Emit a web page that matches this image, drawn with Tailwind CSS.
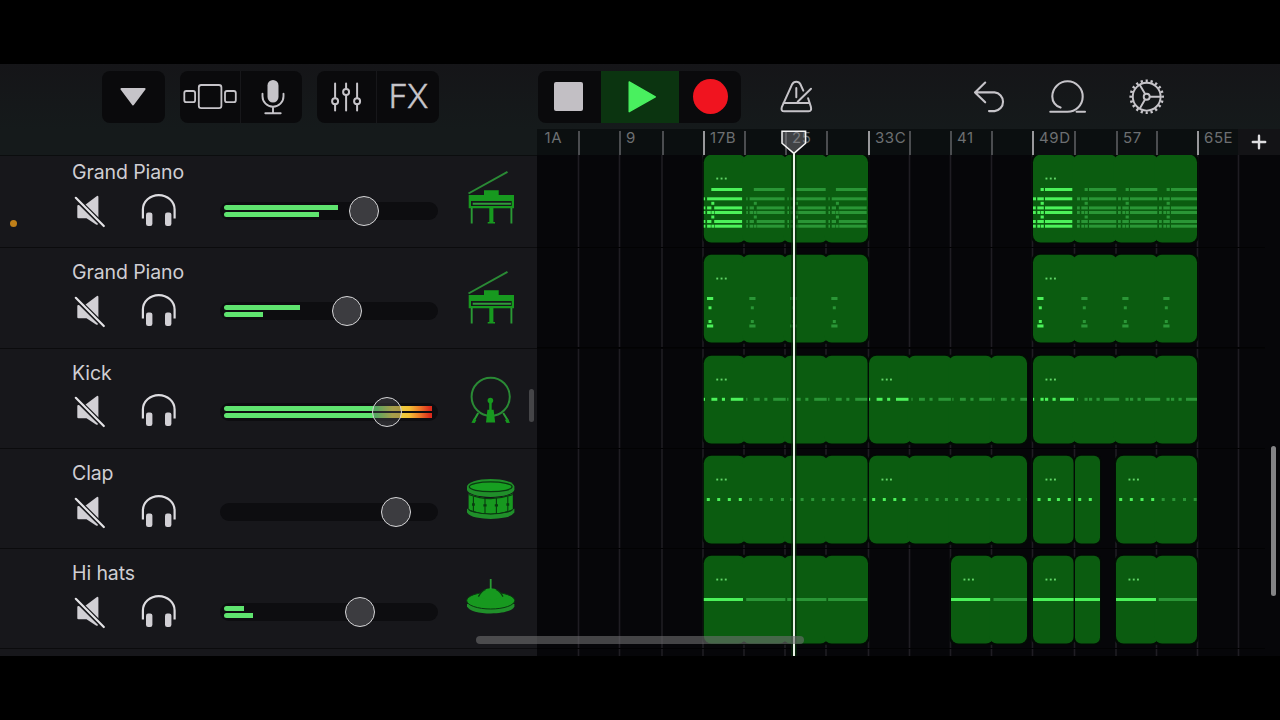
<!DOCTYPE html>
<html lang="en">

<head>
    <meta charset="UTF-8" />
    <title>Tracks</title>
    <meta name="viewport" content="width=device-width, initial-scale=1.0" />
    <script src="https://cdn.jsdelivr.net/npm/@tailwindcss/browser@4"></script>
</head>

<body class="bg-black w-[1280px] h-[720px] overflow-hidden flex flex-col justify-center font-['Inter',sans-serif]">

    <div class="relative h-[592px] flex flex-col overflow-hidden bg-[#17171b]">

        <!-- Toolbar -->
        <header class="h-[65px] shrink-0 flex items-start pt-[7px] pl-[102px] bg-linear-to-b from-[#151518] to-[#151a1b] text-[#c6c4c9]">
            <button class="w-[63px] h-[52px] rounded-lg bg-[#0a0a0c] flex items-center justify-center">
                <svg class="w-[28px] h-[20px] mr-px" viewBox="0 0 28 20" fill="currentColor" stroke="currentColor" stroke-width="2" stroke-linejoin="round">
                    <path d="M2.4 2H25.6L14 17.5Z" />
                </svg>
            </button>

            <div class="ml-[15px] w-[122px] h-[52px] rounded-lg bg-[#0a0a0c] flex overflow-hidden">
                <button class="w-[61px] border-r border-[#17171a] flex items-center justify-center">
                    <svg class="w-[56px] h-[28px] shrink-0" viewBox="182 83 56 28" fill="none" stroke="currentColor" stroke-width="1.8">
                        <rect x="184.3" y="91" width="10.8" height="11.2" rx="2" />
                        <rect x="198.8" y="85" width="22.6" height="23.2" rx="2.4" />
                        <rect x="225" y="91" width="10.8" height="11.2" rx="2" />
                    </svg>
                </button>
                <button class="w-[61px] flex items-center justify-center">
                    <svg class="w-[26px] h-[37px] ml-[2px]" viewBox="259.5 78 26 37" fill="none" stroke="currentColor" stroke-width="1.9" stroke-linecap="round">
                        <rect x="267" y="79" width="11" height="22.6" rx="5.5" fill="currentColor" stroke="none" />
                        <path d="M262 92.8V95.2A10.5 10.5 0 0 0 283 95.2V92.8M272.5 106V112.3M264.8 112.3H280.2" />
                    </svg>
                </button>
            </div>

            <div class="ml-[15px] w-[122px] h-[52px] rounded-lg bg-[#0a0a0c] flex overflow-hidden">
                <button class="w-[60px] border-r border-[#17171a] flex items-center justify-center">
                    <svg class="w-[32px] h-[30px] mr-px" viewBox="330.3 81.5 32 30" fill="none" stroke="currentColor" stroke-width="2" stroke-linecap="round">
                        <path d="M335.4 83V97.3M335.4 104V110M346.4 83V88M346.4 94.7V110M357.4 83V97.3M357.4 104V110" />
                        <circle cx="335.4" cy="100.7" r="3" />
                        <circle cx="346.4" cy="91.4" r="3" />
                        <circle cx="357.4" cy="100.7" r="3" />
                    </svg>
                </button>
                <button class="w-[62px] flex items-center justify-center text-[33px] font-light tracking-[-1px] [-webkit-text-stroke:0.3px_#c6c4c9]">FX</button>
            </div>

            <div class="ml-[99px] w-[203px] h-[52px] rounded-lg bg-[#0a0a0c] flex overflow-hidden">
                <button class="w-[63px] flex items-center justify-center">
                    <span class="w-[29px] h-[29px] rounded-[2px] bg-[#c2bfc4] mr-[2px] -mt-px"></span>
                </button>
                <button class="w-[78px] bg-[#0b3410] flex items-center justify-center">
                    <svg class="w-[30px] h-[34px] ml-[3px]" viewBox="0 0 30 34" fill="#49f05f" stroke="#49f05f" stroke-width="1.4" stroke-linejoin="round">
                        <path d="M2.2 1.9L28.3 16.8L2.2 31.7Z" />
                    </svg>
                </button>
                <button class="w-[62px] flex items-center justify-center">
                    <span class="w-[35px] h-[35px] rounded-full bg-[#f0141f] -mt-px"></span>
                </button>
            </div>

            <svg class="ml-[38px] mt-[8px] w-[36px] h-[36px]" viewBox="779 79 36 36" fill="none" stroke="currentColor" stroke-width="2" stroke-linecap="round" stroke-linejoin="round">
                <path d="M808.1 98.2L810.8 106.5Q812 111.3 808.6 111.3H784.2Q780.6 111.3 781.8 107.2L792.2 84.2Q793.4 81.7 796.3 81.7Q799.2 81.7 800.4 84.2L803.3 90.6" />
                <path d="M783.6 103H809.2M796.3 88V97.3M797.7 101.7L811 88.7" />
            </svg>

            <svg class="ml-[157px] mt-[8px] w-[36px] h-[36px]" viewBox="971 79 36 36" fill="none" stroke="currentColor" stroke-width="2.1" stroke-linecap="round" stroke-linejoin="round">
                <path d="M984.2 82.5L974 92.4L984.2 102.3M974 92.4H993.6A9.4 9.4 0 0 1 993.6 111.1H988" />
            </svg>

            <svg class="ml-[40px] mt-[8px] w-[40px] h-[36px]" viewBox="1048 79 40 36" fill="none" stroke="currentColor" stroke-width="2.1" stroke-linecap="round">
                <path d="M1050.3 111.7H1067.3A15.2 15.2 0 1 0 1052.3 96.4C1052.3 101.5 1055.4 106.2 1060.6 107.6M1076.6 111.7H1085" />
            </svg>

            <svg class="ml-[40px] mt-[7px] w-[38px] h-[38px]" viewBox="1128 78 38 38" fill="none" stroke="currentColor" stroke-width="1.9">
                <circle cx="1146.7" cy="96.7" r="13.9" />
                <circle cx="1146.7" cy="96.7" r="15.9" stroke-width="2.8" pathLength="200" stroke-dasharray="4.4 5.6" stroke-dashoffset="2.2" />
                <circle cx="1146.7" cy="96.7" r="3" />
                <path d="M1150 96.7H1160.5M1145 93.8L1139.7 84.7M1145 99.6L1139.7 108.7" />
            </svg>
        </header>

        <!-- Bar ruler -->
        <div class="h-[26px] shrink-0 flex">
            <div class="w-[537px] bg-[#151a1b]"></div>
            <div id="ruler" class="w-[701px] flex items-end bg-[#0b0f10] text-[15px] leading-[13px] tracking-[0.6px] text-[#6d6f72]"></div>
            <button class="grow flex items-center justify-center bg-[#131316]">
                <svg class="w-[16px] h-[16px]" viewBox="0 0 16 16" stroke="#dedde0" stroke-width="2.4" stroke-linecap="round">
                    <path d="M8 1.8V14.2M1.8 8H14.2" />
                </svg>
            </button>
        </div>

        <!-- Tracks -->
        <main class="grow min-h-0 overflow-hidden flex">
            <div id="headers" class="w-[537px] shrink-0 -mt-[6.8px] bg-[#17171b] relative"></div>
            <div id="lanes" class="w-[743px] shrink-0 -mt-[6.8px] bg-[#060609]"></div>
        </main>

        <!-- Playhead -->
        <svg class="absolute left-[780px] top-[65px] w-[28px] h-[527px]" viewBox="780 129 28 527">
            <path d="M792 154V656M795.8 154V656" stroke="#062b09" stroke-width="1.2" />
            <path d="M782 131.3H805.6V143.2L793.9 153.4L782 143.2Z" fill="#8a8a8e" fill-opacity=".42" stroke="#f4f4f4" stroke-width="1.5" />
            <path d="M794 153V656" stroke="#e9f2e6" stroke-width="2" />
        </svg>

        <span class="absolute left-0 top-[91px] w-[537px] h-px bg-[#0b0d0e]"></span>
        <span class="absolute left-[10px] top-[156px] w-[7px] h-[7px] rounded-full bg-[#c08019]"></span>
        <span class="absolute left-[529px] top-[325px] w-[5px] h-[33px] rounded-full bg-[#454548]"></span>
        <span class="absolute left-[1271px] top-[382px] w-[5px] h-[150px] rounded-full bg-[#848486]"></span>
        <span class="absolute left-[476px] top-[572px] w-[328px] h-[8px] rounded-full bg-[#6e6e70]/60"></span>
    </div>

    <!-- Instrument icons -->
    <svg class="hidden">
        <symbol id="piano" viewBox="0 0 50 56">
            <path d="M2.5 23.5L41.5 1.8" stroke="#2a8a35" stroke-width="2" fill="none" />
            <path d="M18 20.3H32.7V25H48V38.2H2.7V25H18ZM5 31V36H45.7V31Z" fill="#17991f" fill-rule="evenodd" />
            <path d="M6.7 33.7H45" stroke="#2f9c3a" stroke-width="2" />
            <path d="M5.7 38V53.5M45.4 38V53.5" stroke="#2a9a35" stroke-width="1.9" />
            <path d="M23.3 38H27.4V52H29V53.6H21.7V52H23.3Z" fill="#17991f" />
        </symbol>
        <symbol id="kick" viewBox="0 0 50 56">
            <circle cx="24.7" cy="25.8" r="19.1" fill="none" stroke="#2a8a35" stroke-width="2" />
            <path d="M12.2 42L7.6 50M37.2 42L42.2 50" stroke="#2a9a35" stroke-width="2" />
            <path d="M5.4 51.8L7.8 47.4L10.4 49L8.8 52ZM44 51.8L41.6 47.4L39 49L40.6 52Z" fill="#17991f" />
            <circle cx="24.4" cy="29.6" r="2.8" fill="#17991f" />
            <path d="M23.2 31H25.7V38.8H27.6L29.2 51.6H20L21.4 38.8H23.2Z" fill="#17991f" />
        </symbol>
        <symbol id="snare" viewBox="0 0 50 56">
            <path d="M1 15.6A23.7 7.7 0 0 1 48.4 15.6V18.5A23.7 7.4 0 0 1 1 18.5Z" fill="#208f2a" />
            <ellipse cx="24.7" cy="15.8" rx="21.4" ry="4.9" fill="#17a021" stroke="#0a3a10" stroke-width="1.3" />
            <path d="M2.6 22.6Q24.7 32 46.8 22.6V38.6Q24.7 47 2.6 38.6Z" fill="#17991f" />
            <path d="M1 37.4Q3 40 8 41.3Q24.7 45.2 41.4 41.3Q46.4 40 48.4 37.4V41.5Q46 45 39 46.5Q24.7 49.4 10.4 46.5Q3.4 45 1 41.5Z" fill="#208f2a" />
            <path d="M2.6 23.4Q24.7 31.8 46.8 23.4M2.6 38.4Q4.5 40.2 8 41Q24.7 45 41.4 41Q44.9 40.2 46.8 38.4" fill="none" stroke="#0a3a10" stroke-width="1.1" />
            <path d="M7.4 25.2V40.6M19 27V42.6M30.4 27V42.6M41.8 25.2V40.6" stroke="#0a3a10" stroke-width="1.1" />
            <path d="M6 33.5H8.8M17.4 34.4H20.6M28.8 34.4H32M40.4 33.5H43.2" stroke="#0a3a10" stroke-width="2.4" />
        </symbol>
        <symbol id="hats" viewBox="0 0 50 56">
            <path d="M1 33V35.4C3 40 13 42.4 24.7 42.4S46.4 40 48.4 35.4V33Z" fill="#208f2a" />
            <ellipse cx="24.7" cy="29.6" rx="24" ry="8.4" fill="#17991f" stroke="#0a3a10" stroke-width="1" />
            <path d="M12.4 25.6C15.5 20 19 17.3 24.7 17.3S34 20 37 25.6Q24.7 32 12.4 25.6Z" fill="#17991f" />
            <path d="M12.4 25.6C15 21 17 19.6 19.5 18.5M37 25.6C34.4 21 32.4 19.6 30 18.5" fill="none" stroke="#0a3a10" stroke-width="1.3" />
            <path d="M24.7 8V18" stroke="#2a9a35" stroke-width="1.8" />
        </symbol>
    </svg>

    <script>
        // one tick every four bars
        const ticks = [578.5, 619.5, 662, 703, 744, 785, 826, 868.5, 909.5, 950.5, 991.5, 1032.5, 1074.5, 1116, 1156.5, 1197.5];
        const labels = { 619.5: '9', 703: '17B', 785: '25', 868.5: '33C', 950.5: '41', 1032.5: '49D', 1116: '57', 1197.5: '65E' };
        const major = [703, 868.5, 1032.5, 1197.5];

        let rulerHtml = `<div class="h-[24px] pl-[7.5px] shrink-0" style="width:41px">1A</div>`;
        ticks.forEach((x, i) => {
            const left = Math.floor(x);
            const right = i + 1 < ticks.length ? Math.floor(ticks[i + 1]) : 1238;
            const border = major.includes(x) ? 'border-l-2 border-[#98989b]' : 'border-l-2 border-[#4b4d50]';
            rulerHtml += `<div class="h-[24px] shrink-0 pl-[5px] ${border}" style="width:${right - left}px">${labels[x] || ''}</div>`;
        });
        document.getElementById('ruler').innerHTML = rulerHtml;

        const tracks = [
            { name: 'Grand Piano', icon: 'piano', knob: 364, meter: [338, 319] },
            { name: 'Grand Piano', icon: 'piano', knob: 347, meter: [300, 263] },
            { name: 'Kick', icon: 'kick', knob: 387, meter: [432, 432] },
            { name: 'Clap', icon: 'snare', knob: 396, meter: [] },
            { name: 'Hi hats', icon: 'hats', knob: 359.5, meter: [244, 253] },
            { name: '', meter: [] }
        ];

        document.getElementById('headers').innerHTML = tracks.map(t => `
            <div class="h-[100.25px] flex border-b border-[#0b0b0d]">
                ${t.name ? `
                <div class="w-[148px] ml-[72px] pt-[12px] shrink-0">
                    <div class="text-[19.5px] leading-[24px] tracking-[-0.1px] text-[#cfced3] whitespace-nowrap">${t.name}</div>
                    <div class="flex mt-[8.7px]">
                        <svg class="w-[36px] h-[36px] shrink-0" viewBox="72 193 36 36">
                            <path d="M78.4 205H85L96.6 196.2Q98.4 195.2 98.4 197.2V222.8Q98.4 225.4 96 224.4L86.5 218.3H78.4Q77.3 218.3 77.3 217.2V206.1Q77.3 205 78.4 205Z" fill="#d2d0d5" />
                            <path d="M75 197.4L104.2 226.4" stroke="#17171b" stroke-width="5" />
                            <path d="M75.8 197.8L103.8 226" stroke="#e4e3e6" stroke-width="2.2" stroke-linecap="round" />
                        </svg>
                        <svg class="w-[38px] h-[36px] shrink-0 ml-[32px]" viewBox="140 193 38 36">
                            <path d="M142.9 218.6V209.5A15.8 14.4 0 0 1 174.6 209.5V218.6" fill="none" stroke="#dddce0" stroke-width="2.2" />
                            <rect x="146" y="212.6" width="6.4" height="13.4" rx="2.2" fill="#d2d0d5" />
                            <rect x="165" y="212.6" width="6.4" height="13.4" rx="2.2" fill="#d2d0d5" />
                        </svg>
                    </div>
                </div>
                <div class="relative mt-[53.8px] w-[218px] h-[18px] rounded-full bg-[#0d0d10] shrink-0 pl-[4px] pt-[3px] flex flex-col gap-[2px]">
                    ${t.meter.map(m => `<div class="h-[5px] rounded-l-full ${m > 400 ? 'bg-[linear-gradient(to_right,#5fe36f_73%,#e6d84a_81%,#f2c035_89%,#ee7a28_94%,#dc2c1c_99%)]' : 'bg-[#5fe36f]'}" style="width:${m - 224}px"></div>`).join('')}
                    <span class="absolute -top-[6px] w-[30px] h-[30px] rounded-full border-[1.5px] border-[#d6d6d8] ${t.icon === 'kick' ? 'bg-[#4a4a4e]/40' : 'bg-[#3c3c40]'}" style="left:${t.knob - 220 - 15}px"></span>
                </div>
                <svg class="ml-[28px] mt-[21.8px] w-[50px] h-[56px] shrink-0"><use href="#${t.icon}" /></svg>` : ''}
            </div>`).join('');

        // note patterns: [y, x1, x2] relative to the clip start
        const pianoA = [[41.5, 7.5, 38.3], [50.8, 0, 1.3], [50.8, 3.3, 38.3], [55.3, 7.5, 10.5],
            [59.9, 0, 1.6], [59.9, 3.3, 7.6], [59.9, 10.4, 38.3], [64.5, 0, 1.6], [64.5, 3.3, 7], [64.5, 7.6, 10.2], [64.5, 10.8, 38.3], [69, 7.5, 10.5],
            [73.5, 0, 1.6], [73.5, 3.3, 7.6], [73.5, 10.4, 38.3], [78.2, 0, 1.6], [78.2, 3.3, 7], [78.2, 7.6, 10.2], [78.2, 10.8, 38.3]];
        const pianoB = [[41.5, 7.6, 10.8], [41.5, 12, 39.3], [50.8, 0, 3], [50.8, 4.3, 10.8], [50.8, 12, 39.3], [55.3, 7.6, 10.8],
            [59.9, 0, 2.8], [59.9, 4.3, 10.8], [59.9, 12, 39.3], [64.5, 0, 2.8], [64.5, 4.3, 7.2], [64.5, 7.8, 10.8], [64.5, 12, 39.3], [69, 7.6, 10.8],
            [73.5, 0, 2.8], [73.5, 4.3, 10.8], [73.5, 12, 39.3], [78.2, 0, 2.8], [78.2, 4.3, 7.2], [78.2, 7.8, 10.8], [78.2, 12, 39.3]];
        const stab = x => [[50.5, x, x + 6.2], [59.8, x + 1.5, x + 4.5], [73.5, x + 1.5, x + 4.5], [78, x, x + 6.2]];
        const kickA = [[50.3, 0, 1.2], [50.3, 7.6, 13.5], [50.3, 18.1, 21.2], [50.3, 27, 39.5]];
        const kickB = [[50.3, 0, 1.2], [50.3, 7.5, 10.6], [50.3, 12, 15.2], [50.3, 19.5, 22.7], [50.3, 27, 41]];
        const claps = xs => xs.map(x => [50.5, x - 1.5, x + 1.5]);
        const bar = w => [[50.5, 0, w]];

        // clip: start, end, loop boundaries, pattern, loop offsets
        const left = [744, 785, 826], mid = [909.5, 950.5, 991.5], right = [1074.5, 1115.5, 1156.5];
        const lanes = [
            [[703.8, 868, left, pianoA, [0, 42.5, 83.6, 124.6]], [1033, 1197, right, pianoB, [0, 44, 85, 126]]],
            [[703.8, 868, left, stab(3.2), [0, 42.3, 83.4, 124.3]], [1033, 1197, right, stab(4.3), [0, 44, 85, 126]]],
            [[703.8, 868, left, kickA, [0, 42.4, 83.4, 124.4]], [869, 1027, mid, kickA, [0, 42.4, 83.3, 124.3]], [1033, 1197, right, kickB, [0, 44, 85, 126]]],
            [[703.8, 868, left, claps([4.5, 14.9, 25.5, 36.5]), [0, 42.2, 83.4, 124.4]], [869, 1027, mid, claps([4.7, 15.3, 25.8, 35]), [0, 42.4, 83, 124.2]],
                [1033, 1074, [], claps([6, 16.3, 25.4, 36.3]), [0]], [1075, 1100, [], claps([4.7, 15.3]), [0]], [1116, 1197, [1156.5], claps([4.7, 15.3, 26, 36.7]), [0, 42.5]]],
            [[703.8, 868, left, bar(39.2), [0, 42.4, 83.4, 124.3]], [951, 1027, [991.5], bar(39.2), [0, 42.5]],
                [1033, 1074, [], bar(41), [0]], [1075, 1100, [], bar(25), [0]], [1116, 1197, [1156.5], bar(40), [0, 42.7]]],
            []
        ];

        document.getElementById('lanes').innerHTML = lanes.map((clips, row) => {
            let s = `<svg class="block w-[743px] h-[100.25px]" viewBox="537 0 743 100.25">`;
            s += [...ticks, 1238.5].map(x => `<path d="M${x} 0V100.25" stroke="#1f1d23" stroke-width="1.6"/>`).join('');
            s += `<path d="M537 99.8H1265" stroke="#020203" stroke-width="1.5"/>`;
            clips.forEach(([x1, x2, cuts, notes, offsets]) => {
                const edges = [x1, ...cuts, x2];
                // dark halo hides the grid next to a clip
                s += `<rect x="${x1 - 1.4}" y="5.8" width="${x2 - x1 + 2.8}" height="90" rx="6" fill="#030b05"/>`;
                for (let k = 0; k < edges.length - 1; k++) {
                    const a = edges[k] - (k ? 2 : 0), b = edges[k + 1] + (k < edges.length - 2 ? 2 : 0);
                    s += `<rect x="${a}" y="6.7" width="${b - a}" height="87.8" rx="${b - a < 30 ? 6 : 7.5}" fill="#0b5c10"/>`;
                }
                if (x1 !== 1075) {
                    s += [12.5, 16.8, 21].map(d => `<rect x="${x1 + d}" y="29.6" width="1.9" height="1.9" fill="#62d568"/>`).join('');
                }
                offsets.forEach((off, k) => notes.forEach(([y, a, b]) => {
                    const nx = x1 + off + a, w = Math.min(x2, x1 + off + b) - nx;
                    if (w > 0) s += `<rect x="${nx}" y="${y - 1.5}" width="${w}" height="3" fill="${k ? '#2a9636' : '#4cf25a'}"/>`;
                }));
            });
            return s + '</svg>';
        }).join('');
    </script>

</body>

</html>
